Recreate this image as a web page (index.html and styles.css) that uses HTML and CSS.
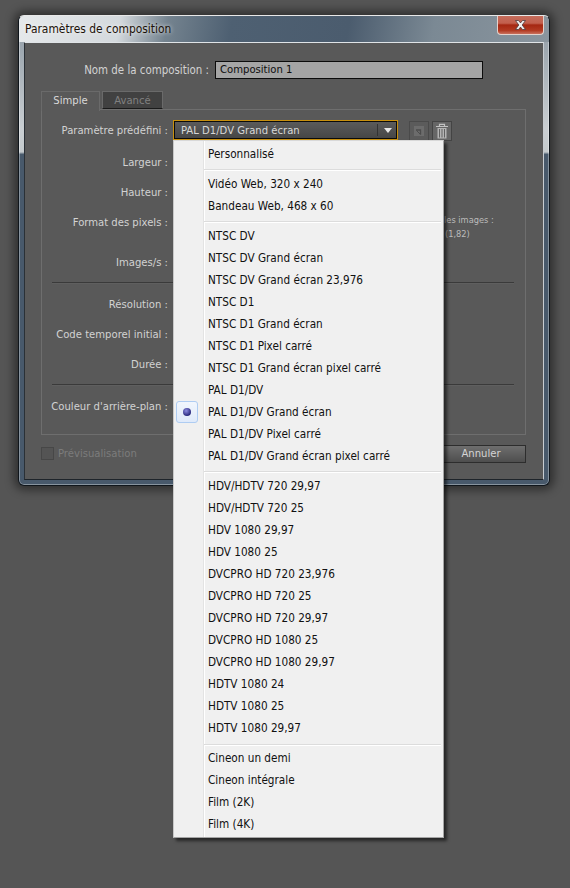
FILE: index.html
```html
<!DOCTYPE html>
<html lang="fr">
<head>
<meta charset="utf-8">
<title>Paramètres de composition</title>
<link rel="stylesheet" href="styles.css">
</head>
<body>
<div class="window">
  <div class="titlebar">
    <span class="title">Paramètres de composition</span>
    <button class="close" aria-label="Fermer"><svg width="11" height="10" viewBox="0 0 11 10"><path d="M.5.5h3l2 2.4 2-2.4h3L7.200 5l3.300 4.500h-3l-2-2.400-2 2.400h-3L3.800 5z" fill="#f2f2f2" stroke="#4c3a3c" stroke-width=".8"/></svg></button>
  </div>
  <div class="panel">
    <div class="name-row">
      <span class="name-label">Nom de la composition :</span>
      <span class="name-input">Composition 1</span>
    </div>
    <div class="tabs">
      <span class="tab active">Simple</span>
      <span class="tab">Avancé</span>
    </div>
    <div class="tabbody">
      <div class="row preset"><span class="label">Paramètre prédéfini :</span>
        <div class="combo"><span class="combo-text">PAL D1/DV Grand écran</span><span class="combo-sep"></span><span class="combo-arrow"></span></div>
        <div class="iconbtn dim"><svg width="12" height="12" viewBox="0 0 12 12"><rect x="1" y="1" width="10" height="10" fill="#6c6c6c"/><path d="M3 5h4.500v4.500" fill="none" stroke="#4c4c4c" stroke-width="1.300"/><path d="M3.500 5.500l4 4" stroke="#4c4c4c"/></svg></div>
        <div class="iconbtn trash"><svg width="14" height="16" viewBox="0 0 14 16"><path d="M1 3.500h12M4.500 3V1.300h5V3" fill="none" stroke="#c2c2c2" stroke-width="1.200"/><path d="M2.500 5h9v10.500h-9z" fill="#b4b4b4"/><path d="M4.500 6v8.500M7 6v8.500M9.500 6v8.500" stroke="#606060"/></svg></div>
      </div>
      <div class="row r-wide"><span class="label">Largeur :</span></div>
      <div class="row r-high"><span class="label">Hauteur :</span></div>
      <div class="row r-format"><span class="label">Format des pixels :</span>
        <div class="ratio"><span>les images :</span><span class="ratio-value">(1,82)</span></div>
      </div>
      <div class="row r-fps"><span class="label">Images/s :</span></div>
      <div class="rule"></div>
      <div class="row r-res"><span class="label">Résolution :</span></div>
      <div class="row r-time"><span class="label">Code temporel initial :</span></div>
      <div class="row r-dur"><span class="label">Durée :</span></div>
      <div class="rule"></div>
      <div class="row r-bg"><span class="label">Couleur d'arrière-plan :</span></div>
    </div>
    <div class="footer">
      <span class="check"></span>
      <span class="preview">Prévisualisation</span>
      <span class="btn">Annuler</span>
    </div>
  </div>
</div>
<div class="menu">
  <div class="item">Personnalisé</div>
  <div class="sep"></div>
  <div class="item">Vidéo Web, 320 x 240</div>
  <div class="item">Bandeau Web, 468 x 60</div>
  <div class="sep"></div>
  <div class="item">NTSC DV</div>
  <div class="item">NTSC DV Grand écran</div>
  <div class="item">NTSC DV Grand écran 23,976</div>
  <div class="item">NTSC D1</div>
  <div class="item">NTSC D1 Grand écran</div>
  <div class="item">NTSC D1 Pixel carré</div>
  <div class="item">NTSC D1 Grand écran pixel carré</div>
  <div class="item">PAL D1/DV</div>
  <div class="item checked"><span class="radio"><span class="dot"></span></span>PAL D1/DV Grand écran</div>
  <div class="item">PAL D1/DV Pixel carré</div>
  <div class="item">PAL D1/DV Grand écran pixel carré</div>
  <div class="sep"></div>
  <div class="item">HDV/HDTV 720 29,97</div>
  <div class="item">HDV/HDTV 720 25</div>
  <div class="item">HDV 1080 29,97</div>
  <div class="item">HDV 1080 25</div>
  <div class="item">DVCPRO HD 720 23,976</div>
  <div class="item">DVCPRO HD 720 25</div>
  <div class="item">DVCPRO HD 720 29,97</div>
  <div class="item">DVCPRO HD 1080 25</div>
  <div class="item">DVCPRO HD 1080 29,97</div>
  <div class="item">HDTV 1080 24</div>
  <div class="item">HDTV 1080 25</div>
  <div class="item">HDTV 1080 29,97</div>
  <div class="sep low"></div>
  <div class="item">Cineon un demi</div>
  <div class="item">Cineon intégrale</div>
  <div class="item">Film (2K)</div>
  <div class="item">Film (4K)</div>
</div>
</body>
</html>
```
FILE: styles.css
```css
* { box-sizing: border-box; }
html, body { margin: 0; height: 100%; }
body {
  background: #555555;
  font-family: "DejaVu Sans", sans-serif;
  font-stretch: condensed;
  font-size: 11.2px;
  color: #d2d2d2;
  overflow: hidden;
  padding: 15px 0 0 18px;
  position: relative;
}
.window {
  width: 532px;
  height: 471px;
  border-radius: 6px;
  border: 1px solid #10161c;
  border-top-color: #e8e8e8;
  box-shadow: 0 0 10px 4px rgba(0,0,0,.45), inset 0 0 0 1px rgba(255,255,255,.35);
  background: linear-gradient(180deg, #8c98a2 0, #c9ced2 24%, #c4cacd 29%, #48596b 29.5%, #48596b 100%);
  padding: 0 5px 5px;
  display: flex;
  flex-direction: column;
}
.titlebar {
  height: 26px;
  margin: 0 -5px;
  padding-left: 6px;
  display: flex;
  align-items: center;
  justify-content: space-between;
  border-radius: 5px 5px 0 0;
  background: linear-gradient(100deg, #e6e9eb 0, #d4d9dd 19%, #74838f 28%, #4e6072 40%, #4b5c6e 62%, #7b8994 78%, #8a959e 100%);
}
.title { color: #1c1209; font-size: 11.9px; text-shadow: 0 0 4px #fff; }
.close {
  width: 47px;
  height: 19px;
  margin: -7px 5px 0 0;
  padding: 0;
  border: 1px solid #e4d2cc;
  border-top: 0;
  border-radius: 0 0 4px 4px;
  background: linear-gradient(180deg, #c66d5c 0, #c25f4d 40%, #a52712 50%, #b23a22 80%, #c9705c 100%);
  display: flex;
  align-items: center;
  justify-content: center;
}
.panel {
  flex: 1;
  background: #595959;
  border: 1px solid #e0e4e7;
  border-right-color: #c7ccd1;
  border-bottom-color: #1e242a;
  border-left-color: #2a3036;
  padding: 17px 17px 0 16px;
  display: flex;
  flex-direction: column;
  position: relative;
}
.name-row { display: flex; align-items: center; height: 19px; padding-left: 41px; }
.name-label { width: 127px; text-align: right; white-space: nowrap; font-size: 11.4px; }
.name-input {
  margin-left: 6px;
  width: 268px;
  height: 18px;
  background: #a5a5a5;
  border: 1px solid #0c0c0c;
  color: #0e0e0e;
  padding-left: 4px;
  line-height: 15px;
}
.tabs { display: flex; gap: 2px; margin-top: 12px; height: 18px; }
.tab {
  width: 61px;
  height: 18px;
  text-align: center;
  line-height: 17px;
  color: #808080;
  background: #414141;
  border: 1px solid #6a6a6a;
  border-bottom-color: #1a1a1a;
}
.tab.active { width: 59px; height: 20px; background: #595959; color: #d8d8d8; border-bottom: 0; position: relative; z-index: 1; }
.tabbody { width: 485px; height: 326px; border: 1px solid #6e6e6e; padding-top: 10px; }
.row { display: flex; align-items: flex-start; position: relative; }
.label { width: 126px; flex: none; margin-top: 1px; text-align: right; white-space: nowrap; line-height: 14px; }
.preset { height: 21px; align-items: flex-start; }
.preset .label { margin-top: 4px; }
.combo {
  margin-left: 5px;
  width: 225px;
  height: 20px;
  border: 1px solid #c8900f;
  background: linear-gradient(180deg, #5c5c5c, #454545);
  box-shadow: inset 0 0 0 1px #0a0a0a;
  display: flex;
  align-items: center;
  padding: 0 5px 0 7px;
}
.combo-text { flex: 1; color: #d8d8d8; }
.combo-sep { width: 1px; height: 12px; background: #333; margin-right: 6px; }
.combo-arrow { width: 0; height: 0; border: 4px solid transparent; border-top: 5px solid #e8e8e8; border-bottom: 0; }
.iconbtn {
  margin: 1px 0 0 11px;
  width: 20px;
  height: 20px;
  border: 1px solid #4a4a4a;
  display: flex;
  align-items: center;
  justify-content: center;
}
.iconbtn.dim { background: #5b5b5b; }
.iconbtn.trash { margin-left: 3px; background: #666; border-color: #444; }
.r-wide { margin-top: 14px; height: 30px; }
.r-high { height: 30px; }
.r-format { height: 40px; }
.r-fps { height: 27px; }
.rule { height: 1px; background: #3a3a3a; box-shadow: 0 1px 0 #5f5f5f; margin: 0 11px 0 10px; }
.r-res { margin-top: 14px; height: 30px; }
.r-time { height: 30px; }
.r-dur { height: 27px; }
.r-bg { margin-top: 14px; }
.ratio { margin: -2px 0 0 276px; display: flex; flex-direction: column; font-size: 9.2px; line-height: 14px; color: #bcbcbc; }
.ratio-value { margin-left: 1px; }
.footer { display: flex; align-items: center; height: 19px; margin-top: 9px; }
.check { width: 13px; height: 13px; border: 1px solid #474747; background: #545454; }
.preview { margin-left: 4px; color: #7c7c7c; flex: 1; }
.btn {
  width: 90px;
  height: 18px;
  border: 1px solid #2d2d2d;
  background: linear-gradient(180deg, #6e6e6e, #4e4e4e);
  color: #d4d4d4;
  text-align: center;
  line-height: 16px;
}
.menu {
  position: absolute;
  left: 173px;
  top: 140px;
  width: 271px;
  height: 698px;
  background: #f0f0f0;
  border: 1px solid #a0a0a0;
  border-color: #d8d8d8 #a5a5a5 #a5a5a5 #c8c8c8;
  box-shadow: 3px 3px 3px rgba(0,0,0,.55);
  padding: 2px;
  color: #111;
  font-size: 11.67px;
  background-image: linear-gradient(90deg, transparent 29px, #e3e3e3 29px, #e3e3e3 30px, #fff 30px, #fff 31px, transparent 31px);
}
.item { height: 22px; line-height: 22px; padding-left: 32px; position: relative; white-space: nowrap; }
.sep { height: 8px; margin-left: 28px; position: relative; }
.sep::after { content: ""; position: absolute; left: 0; right: 0; top: 4px; height: 2px; background: linear-gradient(180deg, #dcdcdc 50%, #fff 50%); }
.sep.low::after { top: 5px; }
.radio {
  position: absolute;
  left: 0;
  top: 0;
  width: 22px;
  height: 22px;
  border: 1px solid #aeccf2;
  border-radius: 3px;
  background: linear-gradient(180deg, #f1f6fd, #dfeafa);
  display: flex;
  align-items: center;
  justify-content: center;
}
.dot { width: 8px; height: 8px; border-radius: 50%; background: radial-gradient(circle at 40% 35%, #8c8ce0, #2a2a7e 70%); }
```
